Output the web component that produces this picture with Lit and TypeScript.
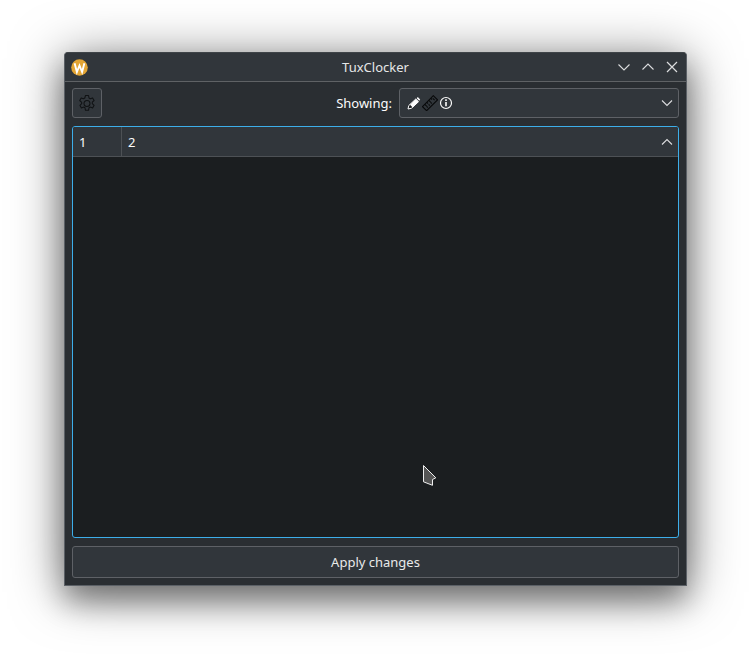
import { LitElement, html, css } from "lit";
import { customElement } from "lit/decorators.js";

@customElement("app-root")
export class AppRoot extends LitElement {
  static styles = css`
    :host { display: block; width: 751px; height: 662px; background: #fff; overflow: hidden; box-sizing: border-box; padding: 52px 0 0 64px; font-family: "Noto Sans", sans-serif; font-size: 13px; color: #fcfcfc; }
    .win { position: relative; box-sizing: border-box; width: 623px; height: 534px; background: #2a2e32; border: 1px solid #5b6066; border-top-color: #3f4448; border-radius: 4px 4px 0 0; display: flex; flex-direction: column; box-shadow: 0 6px 52px rgba(0,0,0,.5), 0 16px 28px rgba(0,0,0,.32); }
    .title { flex: none; height: 28px; background: #31363b; border-bottom: 1px solid #5f6265; border-radius: 3px 3px 0 0; display: flex; align-items: center; padding: 0 6px 0 6px; position: relative; }
    .logo { width: 17px; height: 17px; display: block; }
    .ttext { position: absolute; left: 0; right: 0; text-align: center; top: 5px; line-height: 18px; color: #e6e7e8; }
    .wbtns { margin-left: auto; display: flex; gap: 8px; align-items: center; position: relative; }
    .wbtns svg { width: 16px; height: 16px; display: block; }
    .body { flex: 1; display: flex; flex-direction: column; padding: 6px 7px 7px; gap: 8px; }
    .bar { display: flex; height: 30px; align-items: stretch; }
    .btn { box-sizing: border-box; background: #31363b; border: 1px solid #5e6166; border-radius: 3px; }
    .gear { width: 30px; display: flex; align-items: center; justify-content: center; }
    .gear svg { width: 18px; height: 18px; display: block; }
    .show { margin-left: auto; align-self: center; margin-right: 7px; line-height: 18px; color: #fcfcfc; }
    .combo { width: 280px; display: flex; align-items: center; padding: 0 3px 0 7px; }
    .combo svg { display: block; }
    .icons { display: flex; gap: 1px; align-items: center; }
    .chev { margin-left: auto; }
    .table { flex: 1; box-sizing: border-box; background: #1b1e20; border: 1px solid #3daee9; border-radius: 3px; min-height: 0; }
    .head { height: 30px; box-sizing: border-box; background: #31363b; border-bottom: 1px solid #4d5155; display: flex; align-items: center; border-radius: 2px 2px 0 0; }
    .c1 { width: 49px; box-sizing: border-box; height: 29px; line-height: 31px; padding-left: 6px; border-right: 1px solid #4d5155; }
    .c2 { flex: 1; height: 29px; line-height: 31px; padding-left: 6px; }
    .head svg { margin-right: 3px; display: block; }
    .apply { height: 32px; line-height: 30px; text-align: center; color: #e9eaea; flex: none; }
    .cursor { position: absolute; left: 358px; top: 412px; width: 14px; height: 22px; }
  `;

  render() {
    return html`<div class="win">
      <div class="title">
        <svg class="logo" viewBox="0 0 17 17">
          <circle cx="8.500" cy="8.500" r="8.300" fill="#e3a535"/>
          <path d="M3.600 4.200 5.900 13 8.500 6.500 11.100 13 13.400 4.200" fill="none" stroke="#fff" stroke-width="1.900" stroke-linejoin="miter"/>
        </svg>
        <div class="ttext">TuxClocker</div>
        <div class="wbtns">
          <svg viewBox="0 0 16 16"><path d="M2.500 5.500 8 11l5.500-5.500" fill="none" stroke="#dcdddf" stroke-width="1.100"/></svg>
          <svg viewBox="0 0 16 16"><path d="M2.500 10.500 8 5l5.500 5.500" fill="none" stroke="#dcdddf" stroke-width="1.100"/></svg>
          <svg viewBox="0 0 16 16"><path d="M3 3l10 10M13 3 3 13" fill="none" stroke="#dcdddf" stroke-width="1.200"/></svg>
        </div>
      </div>
      <div class="body">
        <div class="bar">
          <div class="btn gear">
            <svg viewBox="0 0 18 18" fill="none" stroke="#101214" stroke-width="1.050" stroke-linejoin="round">
              <path d="M7.500 1.500h3l.5 2.500 1.300.7 2.300-.8 1.500 2.600-1.800 1.600v1.600l1.800 1.600-1.500 2.600-2.300-.8-1.300.7-.5 2.500h-3l-.5-2.500-1.300-.7-2.300.8-1.500-2.600 1.800-1.600V8.400L1.700 6.500l1.500-2.600 2.300.8 1.300-.7z"/>
              <circle cx="9" cy="9.500" r="3"/>
            </svg>
          </div>
          <div class="show">Showing:</div>
          <div class="btn combo">
            <div class="icons">
              <svg width="14" height="16" viewBox="0 0 14 16"><path d="M1 14 1.800 10.500 8.800 4 11.500 6.700 4.500 13.200z" fill="#1b1e20" stroke="#fcfcfc" stroke-width="1"/><path d="M3 9.800 8.800 4 11.500 6.700 5.700 12.500z" fill="#fcfcfc"/><path d="M9.600 3.200 10.800 2 13.200 4.400 12.200 5.800z" fill="#fcfcfc"/></svg>
              <svg width="16" height="16" viewBox="0 0 16 16" fill="none" stroke="#08090a" stroke-width="1.100"><path d="M.5 11.600 11.300.7 15.500 4.900 4.600 15.700z"/><path d="M2.800 9.300l1.800 1.800M4.800 7.300l1.200 1.200M6.800 5.300l1.800 1.800M8.800 3.300l1.200 1.200M10.800 3.300l1.800 1.800M4.600 11.300l1.200 1.200M6.600 9.300l1.200 1.200M8.600 7.300l1.200 1.200" stroke-width="1.100"/></svg>
              <svg width="14" height="14" viewBox="0 0 14 14" fill="none"><circle cx="7" cy="7" r="5.500" stroke="#fcfcfc" stroke-width="1.200"/><path d="M7 6v4.300" stroke="#fcfcfc" stroke-width="1.600"/><path d="M7 3.300v1.600" stroke="#fcfcfc" stroke-width="1.600"/></svg>
            </div>
            <svg class="chev" width="16" height="16" viewBox="0 0 16 16"><path d="M3 5.500 8 10.500l5-5" fill="none" stroke="#dcdddf" stroke-width="1.100"/></svg>
          </div>
        </div>
        <div class="table">
          <div class="head">
            <div class="c1">1</div>
            <div class="c2">2</div>
            <svg width="16" height="16" viewBox="0 0 16 16"><path d="M3 10.500 8 5.500l5 5" fill="none" stroke="#dcdddf" stroke-width="1.100"/></svg>
          </div>
        </div>
        <div class="btn apply">Apply changes</div>
      </div>
      <svg class="cursor" viewBox="0 0 14 22"><path d="M.5.500 12.800 12.800 9.500 14.500 9.500 20.300.5 16.800z" fill="#555" stroke="#efefef" stroke-width="1"/></svg>
    </div>`;
  }
}
